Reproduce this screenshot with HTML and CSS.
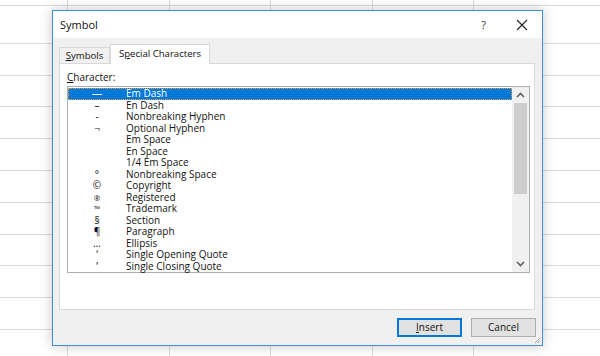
FILE: index.html
```html
<!DOCTYPE html>
<html>
<head>
<meta charset="utf-8">
<link rel="stylesheet" href="styles.css">
</head>
<body>
<div class="sheet"></div>
<div class="dialog">
  <div class="titlebar">
    <span class="title">Symbol</span>
    <span class="help">?</span>
    <span class="close">
      <svg width="12" height="12" viewBox="0 0 12 12"><path d="M1 1L11 11M11 1L1 11" stroke="#222" stroke-width="1.1" fill="none"/></svg>
    </span>
  </div>
  <div class="body">
    <div class="tabs">
      <div class="tab"><u>S</u>ymbols</div>
      <div class="tab active">S<u>p</u>ecial Characters</div>
    </div>
    <div class="panel">
      <div class="label"><u>C</u>haracter:</div>
      <div class="listbox">
        <div class="rows">
          <div class="row selected"><span class="sym">—</span><span class="name">Em Dash</span></div>
          <div class="row"><span class="sym">–</span><span class="name">En Dash</span></div>
          <div class="row"><span class="sym">-</span><span class="name">Nonbreaking Hyphen</span></div>
          <div class="row"><span class="sym">¬</span><span class="name">Optional Hyphen</span></div>
          <div class="row"><span class="sym"></span><span class="name">Em Space</span></div>
          <div class="row"><span class="sym"></span><span class="name">En Space</span></div>
          <div class="row"><span class="sym"></span><span class="name">1/4 Em Space</span></div>
          <div class="row"><span class="sym">°</span><span class="name">Nonbreaking Space</span></div>
          <div class="row"><span class="sym">©</span><span class="name">Copyright</span></div>
          <div class="row"><span class="sym small">®</span><span class="name">Registered</span></div>
          <div class="row"><span class="sym small">™</span><span class="name">Trademark</span></div>
          <div class="row"><span class="sym">§</span><span class="name">Section</span></div>
          <div class="row"><span class="sym">¶</span><span class="name">Paragraph</span></div>
          <div class="row"><span class="sym">…</span><span class="name">Ellipsis</span></div>
          <div class="row"><span class="sym">‘</span><span class="name">Single Opening Quote</span></div>
          <div class="row"><span class="sym">’</span><span class="name">Single Closing Quote</span></div>
        </div>
        <div class="scrollbar">
          <div class="arrow"><svg width="9" height="6" viewBox="0 0 9 6"><path d="M1 5L4.5 1.5L8 5" stroke="#606060" stroke-width="1.6" fill="none"/></svg></div>
          <div class="track"><div class="thumb"></div></div>
          <div class="arrow"><svg width="9" height="6" viewBox="0 0 9 6"><path d="M1 1L4.5 4.5L8 1" stroke="#606060" stroke-width="1.6" fill="none"/></svg></div>
        </div>
      </div>
    </div>
    <div class="footer">
      <div class="btn default"><u>I</u>nsert</div>
      <div class="btn">Cancel</div>
    </div>
  </div>
  <svg class="grip" width="7" height="7" viewBox="0 0 7 7"><path d="M6 1L1 6M6 3.5L3.5 6" stroke="#a0a0a0" stroke-width="1" fill="none"/></svg>
</div>
</body>
</html>
```
FILE: styles.css
```css
html, body {
  margin: 0;
  padding: 0;
}
body {
  width: 600px;
  height: 356px;
  overflow: hidden;
  position: relative;
  background: #fff;
  font-family: "Open Sans", "Noto Sans", sans-serif;
  color: #000;
}
.sheet {
  width: 600px;
  height: 356px;
  background-image:
    repeating-linear-gradient(to right, transparent 0, transparent 100.4px, #dadada 100.4px, #dadada 101.4px),
    repeating-linear-gradient(to bottom, transparent 0, transparent 30.8px, #dadada 30.8px, #dadada 31.8px);
  background-position: -33px 0, 0 12px;
}
.dialog {
  position: absolute;
  left: 52px;
  top: 10px;
  width: 489px;
  height: 334px;
  border: 1px solid #3b8fdb;
  background: #f0f0f0;
  box-shadow: 0 0 12px rgba(0,0,0,0.22);
  display: flex;
  flex-direction: column;
}
.titlebar {
  height: 27px;
  background: #fff;
  display: flex;
  align-items: center;
  font-size: 11px;
}
.title {
  margin-left: 7px;
  flex: 1;
  color: #111;
}
.help {
  font-size: 11px;
  color: #333;
  margin-right: 30px;
}
.close {
  width: 12px;
  height: 12px;
  margin-right: 14px;
  display: flex;
}
.body {
  flex: 1;
  display: flex;
  flex-direction: column;
  padding: 6px 7px 0 6px;
  font-size: 10px;
}
.tabs {
  display: flex;
  height: 19px;
  align-items: flex-end;
}
.tab {
  height: 16px;
  line-height: 15px;
  border: 1px solid #d9d9d9;
  border-bottom: none;
  box-sizing: border-box;
  width: 51px;
  text-align: center;
  white-space: nowrap;
  color: #111;
  font-size: 9.6px;
}
.tab.active {
  background: #fff;
  height: 20px;
  line-height: 18px;
  width: 100px;
  margin-bottom: -1px;
  position: relative;
  z-index: 1;
}
.panel {
  background: #fff;
  border: 1px solid #d9d9d9;
  height: 247px;
  box-sizing: border-box;
  padding: 7px 6px 0 7px;
}
.label {
  height: 15px;
  line-height: 13px;
  color: #111;
}
.listbox {
  display: flex;
  width: 463px;
  height: 187px;
  box-sizing: border-box;
  border: 1px solid #abadb3;
  background: #fff;
}
.rows {
  flex: 1;
  padding-top: 1px;
}
.row {
  height: 11.5px;
  line-height: 11.5px;
  display: flex;
  color: #111;
  box-sizing: border-box;
  white-space: nowrap;
}
.row.selected {
  background: #0078d7;
  color: #fff;
  outline: 1px dotted #e8a040;
  outline-offset: -1px;
}
.sym {
  width: 58px;
  text-align: center;
}
.sym.small {
  font-size: 8px;
}
.name {
  flex: 1;
}
.scrollbar {
  width: 17px;
  background: #f0f0f0;
  display: flex;
  flex-direction: column;
}
.arrow {
  height: 16px;
  display: flex;
  align-items: center;
  justify-content: center;
}
.track {
  flex: 1;
  padding: 0 2px;
}
.thumb {
  height: 91px;
  background: #cdcdcd;
}
.footer {
  flex: 1;
  display: flex;
  justify-content: flex-end;
  padding-top: 8px;
  gap: 9px;
  margin-right: -1px;
}
.btn {
  width: 65px;
  height: 19px;
  box-sizing: border-box;
  border: 1px solid #adadad;
  background: #e1e1e1;
  text-align: center;
  line-height: 17px;
  font-size: 10px;
  color: #111;
}
.btn.default {
  border: 2px solid #0078d7;
  line-height: 15px;
}
.grip {
  position: absolute;
  right: 1px;
  bottom: 1px;
}
```
